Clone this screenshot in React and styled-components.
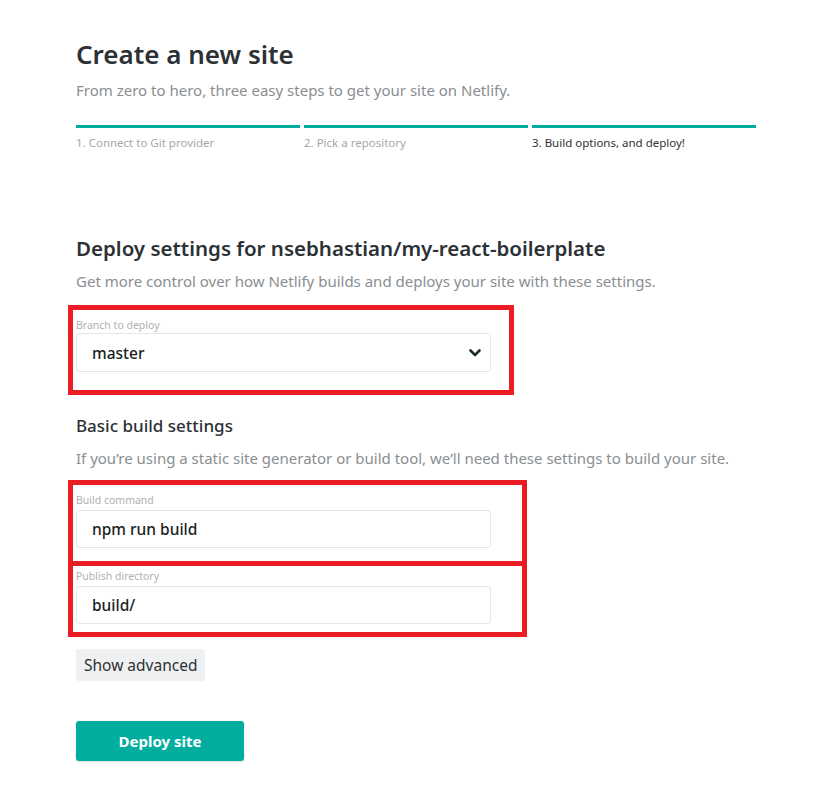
import React from "react";
import styled, { createGlobalStyle } from "styled-components";

const GlobalStyle = createGlobalStyle`
  body {
    margin: 0;
    background: #fff;
    font-family: "Noto Sans", "Open Sans", sans-serif;
    color: #2e3133;
  }
`;

const Page = styled.div`
  width: 680px;
  padding: 37px 0 40px 76px;
`;

const Title = styled.h1`
  margin: 0;
  font-size: 26px;
  line-height: 34px;
  font-weight: 600;
  color: #2c3135;
`;

const Lead = styled.p`
  margin: ${(p) => p.$top || 9}px 0 0;
  font-size: 15px;
  line-height: 20px;
  color: #8a8e92;
`;

const Steps = styled.ol`
  list-style: none;
  margin: 25px 0 0;
  padding: 0;
  display: grid;
  grid-template-columns: repeat(3, 1fr);
  gap: 4px;
`;

const Step = styled.li`
  border-top: 3px solid #00ad9f;
  padding-top: 7px;
  font-size: 11.5px;
  line-height: 16px;
  color: ${(p) => (p.$active ? "#2e3133" : "#a3a7ab")};
`;

const Heading = styled.h2`
  margin: 83px 0 0;
  font-size: 20.5px;
  line-height: 28px;
  font-weight: 600;
  color: #2c3135;
`;

const SubHeading = styled.h3`
  margin: 20px 0 0;
  font-size: 17px;
  line-height: 22px;
  font-weight: 500;
  color: #2c3135;
`;

const Highlight = styled.div`
  margin: ${(p) => p.$top || 0}px 0 0 -8px;
  width: ${(p) => p.$width}px;
  box-sizing: border-box;
  border: 5px solid #ec1c24;
  border-top-width: ${(p) => (p.$joined ? 0 : 5)}px;
  padding: ${(p) => p.$pad};
`;

const Field = styled.label`
  display: block;
`;

const FieldLabel = styled.span`
  display: block;
  font-size: 10.5px;
  line-height: 14px;
  color: #aeb1b4;
  margin-bottom: ${(p) => p.$gap || 3}px;
`;

const InputBox = styled.div`
  width: 415px;
  height: ${(p) => p.$h || 38}px;
  box-sizing: border-box;
  border: 1px solid #e4e5e6;
  border-radius: 3px;
  display: flex;
  align-items: center;
  justify-content: space-between;
  padding: 0 9px 0 15px;
  font-size: 15.5px;
  font-weight: 500;
  color: #1b1f23;
`;

const Chevron = () => (
  <svg width="12" height="8" viewBox="0 0 12 8">
    <path d="M1.5 1.5 L6 6 L10.5 1.5" fill="none" stroke="#1f2b33" strokeWidth="2.6" strokeLinecap="round" strokeLinejoin="round" />
  </svg>
);

const GhostButton = styled.button`
  margin-top: 12px;
  height: 32px;
  padding: 0 8px;
  border: 0;
  border-radius: 3px;
  background: #eff0f2;
  font-family: inherit;
  font-size: 15.5px;
  color: #2e3133;
  display: block;
`;

const PrimaryButton = styled.button`
  margin-top: 40px;
  width: 168px;
  height: 40px;
  border: 0;
  border-radius: 3px;
  background: #00ad9f;
  box-shadow: 0 1px 2px rgba(0, 0, 0, 0.15);
  color: #fff;
  font-family: inherit;
  font-size: 15px;
  font-weight: 700;
  display: block;
`;

export default function App() {
  return (
    <>
      <GlobalStyle />
      <Page>
        <Title>Create a new site</Title>
        <Lead>From zero to hero, three easy steps to get your site on Netlify.</Lead>
        <Steps>
          <Step>1. Connect to Git provider</Step>
          <Step>2. Pick a repository</Step>
          <Step $active>3. Build options, and deploy!</Step>
        </Steps>

        <Heading>Deploy settings for nsebhastian/my-react-boilerplate</Heading>
        <Lead>Get more control over how Netlify builds and deploys your site with these settings.</Lead>

        <Highlight $top={14} $width={446} $pad="8px 18px 18px 3px">
          <Field>
            <FieldLabel $gap={1}>Branch to deploy</FieldLabel>
            <InputBox $h={39}>
              master
              <Chevron />
            </InputBox>
          </Field>
        </Highlight>

        <SubHeading>Basic build settings</SubHeading>
        <Lead $top={11}>
          If you’re using a static site generator or build tool, we’ll need these settings to build your site.
        </Lead>

        <Highlight $top={12} $width={459} $pad="8px 31px 13px 3px">
          <Field>
            <FieldLabel>Build command</FieldLabel>
            <InputBox>npm run build</InputBox>
          </Field>
        </Highlight>
        <Highlight $joined $width={459} $pad="3px 31px 8px 3px">
          <Field>
            <FieldLabel>Publish directory</FieldLabel>
            <InputBox>build/</InputBox>
          </Field>
        </Highlight>

        <GhostButton>Show advanced</GhostButton>
        <PrimaryButton>Deploy site</PrimaryButton>
      </Page>
    </>
  );
}
